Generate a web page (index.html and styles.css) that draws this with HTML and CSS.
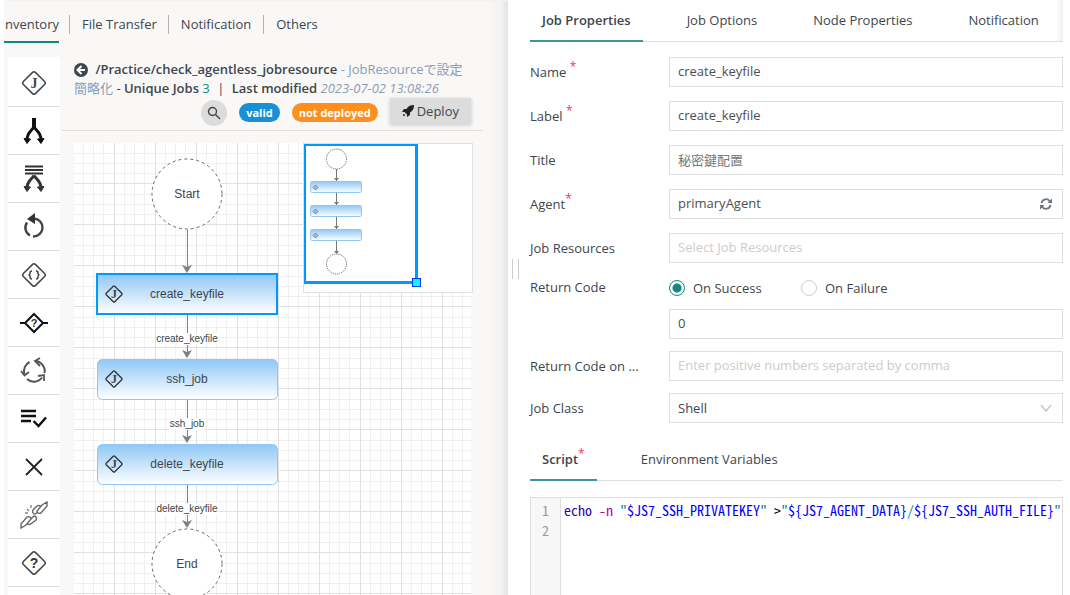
FILE: index.html
```html
<!DOCTYPE html>
<html lang="en">
<head>
    <meta charset="UTF-8">
    <title>Workflow configuration</title>
    <link rel="stylesheet" href="styles.css">
</head>
<body>
    <div class="page">
        <section class="left-panel">
            <nav class="main-nav">
                <a href="#" class="active">nventory</a>
                <a href="#">File Transfer</a>
                <a href="#">Notification</a>
                <a href="#">Others</a>
            </nav>
            <div class="workspace">
                <div class="toolbar">
                    <button type="button" aria-label="Job">
                        <svg width="28" height="28" viewBox="0 0 28 28" fill="none" stroke="#444" stroke-width="1.5">
                            <rect x="5.5" y="5.5" width="17" height="17" rx="2" transform="rotate(45 14 14)"/>
                            <text class="glyph-j" x="14" y="19">J</text>
                        </svg>
                    </button>
                    <button type="button" aria-label="Fork">
                        <svg width="28" height="28" viewBox="0 0 28 28" fill="none" stroke="#111" stroke-width="3">
                            <path d="M14 1v10" stroke-width="4"/>
                            <path d="M14 9c-1 5-7 5-7 14M14 9c1 5 7 5 7 14"/>
                            <path d="M4 21.500l3 5 3.500-4.500zM24 21.500l-3 5-3.500-4.500z" fill="#111" stroke-width="1"/>
                        </svg>
                    </button>
                    <button type="button" aria-label="Fork list">
                        <svg width="28" height="28" viewBox="0 0 28 28" fill="none" stroke="#333" stroke-width="3">
                            <path d="M5 1.500h18M5 5h18M5 8.500h18" stroke-width="1.800"/>
                            <path d="M7 23c0-7 4-8 7-12.500M21 23c0-7-4-8-7-12.500"/>
                            <path d="M4 21.500l3 5 3.500-4.500zM24 21.500l-3 5-3.500-4.500z" fill="#333" stroke-width="1"/>
                        </svg>
                    </button>
                    <button type="button" aria-label="Retry">
                        <svg width="28" height="28" viewBox="0 0 28 28" fill="none" stroke="#444" stroke-width="2.4">
                            <path d="M14 5.500a9 9 0 1 1-1 18M10 22.500a9 9 0 0 1-3-13"/>
                            <path d="M15 0v11l-8-5z" fill="#333" stroke="none"/>
                        </svg>
                    </button>
                    <button type="button" aria-label="Lock">
                        <svg width="28" height="28" viewBox="0 0 28 28" fill="none" stroke="#444" stroke-width="1.5">
                            <rect x="5.5" y="5.5" width="17" height="17" rx="2" transform="rotate(45 14 14)"/>
                            <path d="M12 10c-2 0-2 1-2 2s0 2-1.500 2c1.500 0 1.500 1 1.500 2s0 2 2 2M16 10c2 0 2 1 2 2s0 2 1.500 2c-1.500 0-1.500 1-1.500 2s0 2-2 2"/>
                        </svg>
                    </button>
                    <button type="button" aria-label="If">
                        <svg width="28" height="28" viewBox="0 0 28 28" fill="none" stroke="#111" stroke-width="2">
                            <path d="M14 5l9 9-9 9-9-9zM0 14h5M23 14h5"/>
                            <text class="glyph-q small" x="14" y="18">?</text>
                        </svg>
                    </button>
                    <button type="button" aria-label="Cycle">
                        <svg width="28" height="28" viewBox="0 0 28 28" fill="none" stroke="#555" stroke-width="2">
                            <path d="M4.500 17a10 10 0 0 1 5-12M15 4a10 10 0 0 1 9.500 12M22 20.500a10 10 0 0 1-15 1.500"/>
                            <path d="M20 1l-5 3 5 5M1 14l3.500 4.500L9 15M24 24v-6l-6 1" stroke-width="1.800"/>
                        </svg>
                    </button>
                    <button type="button" aria-label="Finish">
                        <svg width="28" height="28" viewBox="0 0 28 28" fill="none" stroke="#111" stroke-width="2.4">
                            <path d="M1 6h15M1 11h15M1 16h10M13.500 16l5 5L26 12.500"/>
                        </svg>
                    </button>
                    <button type="button" aria-label="Fail">
                        <svg width="28" height="28" viewBox="0 0 28 28" fill="none" stroke="#222" stroke-width="1.8">
                            <path d="M6 6l16 16M22 6L6 22"/>
                        </svg>
                    </button>
                    <button type="button" aria-label="Break link">
                        <svg width="28" height="28" viewBox="0 0 28 28" fill="none" stroke="#666" stroke-width="1.4">
                            <path d="M1 27v-4l6-7c2-1 4 0 4 2l-5 6zM7 22c1 2 3 2 5 0l4-3c1-2 0-4-2-4l-3 3"/>
                            <path d="M27 1v4l-6 7c-2 1-4 0-4-2l5-6zM21 6c-1-2-3-2-5 0l-3 3c-1 2 0 4 2 4l3-2"/>
                            <path d="M7 8l2 2M11 4v3M5 12h3" stroke="#888"/>
                        </svg>
                    </button>
                    <button type="button" aria-label="Prompt">
                        <svg width="28" height="28" viewBox="0 0 28 28" fill="none" stroke="#444" stroke-width="1.5">
                            <rect x="5.5" y="5.5" width="17" height="17" rx="2" transform="rotate(45 14 14)"/>
                            <text class="glyph-q" x="14" y="19">?</text>
                        </svg>
                    </button>
                    <button type="button" aria-label="More"></button>
                </div>

                <div class="designer">
                    <header class="wf-header">
                        <div class="wf-title">
                            <svg class="back" width="14" height="14" viewBox="0 0 14 14">
                                <circle cx="7" cy="7" r="7" fill="#3d464d"/>
                                <path d="M7.500 3L3.500 7l4 4M4 7h7" fill="none" stroke="#fff" stroke-width="2"/>
                            </svg>
                            <span class="path">/Practice/check_agentless_jobresource</span>
                            <span class="muted">- JobResourceで設定簡略化</span>
                            - <b>Unique Jobs</b> <span class="count">3</span>
                            <span class="bar">|</span>
                            <b>Last modified</b> <i class="muted">2023-07-02 13:08:26</i>
                        </div>
                        <div class="wf-actions">
                            <button type="button" class="search" aria-label="Search">
                                <svg width="14" height="14" viewBox="0 0 14 14" fill="none" stroke="#444" stroke-width="1.4">
                                    <circle cx="5.500" cy="5.500" r="4"/>
                                    <path d="M8.500 8.500l4.500 4.500"/>
                                </svg>
                            </button>
                            <span class="pill valid">valid</span>
                            <span class="pill draft">not deployed</span>
                            <button type="button" class="deploy">
                                <svg width="12" height="12" viewBox="0 0 12 12" fill="#222">
                                    <path d="M12 0C8 0 6 1.500 4.500 4H2L0 7l2.500 0 2.500 2.500V12l3-2V7.500C10.500 6 12 4 12 0zM1.500 8.500L1 11l2.500-.5z"/>
                                </svg>
                                Deploy
                            </button>
                        </div>
                    </header>

                    <div class="canvas">
                        <svg class="graph" width="100%" height="600">
                            <defs>
                                <pattern id="grid" x="40" y="40" width="41" height="41" patternUnits="userSpaceOnUse">
                                    <path d="M10 0h1v41h-1zM20 0h1v41h-1zM30 0h1v41h-1zM0 11h41v1H0zM0 21h41v1H0zM0 31h41v1H0z" fill="#f0f0f0"/>
                                    <path d="M0 0h1v41H0zM0 0h41v1H0z" fill="#e0e0e0"/>
                                </pattern>
                                <linearGradient id="job" x1="0" y1="0" x2="0" y2="1">
                                    <stop offset="0" stop-color="#90c7f5"/>
                                    <stop offset="1" stop-color="#fff"/>
                                </linearGradient>
                                <symbol id="job-icon" viewBox="0 0 20 20">
                                    <rect x="4" y="4" width="12" height="12" rx="1" transform="rotate(45 10 10)" fill="none" stroke="#333" stroke-width="1.300"/>
                                    <text class="node-j" x="10" y="14">J</text>
                                </symbol>
                                <symbol id="head" viewBox="0 0 10 10">
                                    <path d="M0 1l5 8 5-8-5 2z" fill="#808080"/>
                                </symbol>
                            </defs>
                            <rect width="100%" height="100%" fill="url(#grid)"/>

                            <g class="edges">
                                <path d="M113.500 87v40M113.500 172v40M113.500 257v40M113.500 342v40"/>
                            </g>
                            <use href="#head" x="108" y="121" width="10" height="10"/>
                            <use href="#head" x="108" y="206" width="10" height="10"/>
                            <use href="#head" x="108" y="291" width="10" height="10"/>
                            <use href="#head" x="108" y="376" width="10" height="10"/>

                            <circle class="end-node" cx="113" cy="51" r="35"/>
                            <circle class="end-node" cx="113" cy="421" r="35"/>

                            <rect x="23" y="131" width="180" height="40" fill="url(#job)" stroke="#09f" stroke-width="2"/>
                            <rect class="job-node" x="23.5" y="216.5" width="180" height="40" rx="5"/>
                            <rect class="job-node" x="23.5" y="301.5" width="180" height="40" rx="5"/>
                            <use href="#job-icon" x="30" y="141" width="20" height="20"/>
                            <use href="#job-icon" x="30" y="226" width="20" height="20"/>
                            <use href="#job-icon" x="30" y="311" width="20" height="20"/>

                            <g class="node-text">
                                <text x="113" y="55">Start</text>
                                <text x="113" y="155">create_keyfile</text>
                                <text x="113" y="240">ssh_job</text>
                                <text x="113" y="325">delete_keyfile</text>
                                <text x="113" y="425">End</text>
                            </g>
                            <g fill="#fff">
                                <rect x="82" y="190" width="62" height="12"/>
                                <rect x="95" y="275" width="36" height="12"/>
                                <rect x="82" y="360" width="62" height="12"/>
                            </g>
                            <g class="edge-text">
                                <text x="113" y="199">create_keyfile</text>
                                <text x="113" y="284">ssh_job</text>
                                <text x="113" y="369">delete_keyfile</text>
                            </g>
                        </svg>

                        <div class="outline">
                            <svg width="168" height="148" viewBox="0 0 168 148">
                                <path d="M32.500 25v82" stroke="#777"/>
                                <g fill="#fff" stroke="#555" stroke-dasharray="1 1">
                                    <circle cx="32.500" cy="15" r="10"/>
                                    <circle cx="32.500" cy="120" r="10"/>
                                </g>
                                <g fill="url(#job)" stroke="#8fc6f4">
                                    <rect x="6.500" y="37.500" width="51" height="11" rx="2"/>
                                    <rect x="6.500" y="61.500" width="51" height="11" rx="2"/>
                                    <rect x="6.500" y="85.500" width="51" height="11" rx="2"/>
                                </g>
                                <g fill="#abc" stroke="#6e8ba5">
                                    <path d="M11.500 41l2.500 2.500-2.500 2.500L9 43.500zM11.500 65l2.500 2.500-2.500 2.500L9 67.500zM11.500 89l2.500 2.500-2.500 2.500L9 91.500z"/>
                                </g>
                                <path d="M30 34h5l-2.500 3zM30 58h5l-2.500 3zM30 82h5l-2.500 3zM30 107h5l-2.500 3z" fill="#777"/>
                                <path d="M0 0h114v140H0zM2 2v135h109V2z" fill="#09f" fill-rule="evenodd"/>
                                <rect x="108.500" y="134.500" width="8" height="8" fill="#0ff" stroke="#03f"/>
                            </svg>
                        </div>
                    </div>
                </div>
            </div>
        </section>

        <div class="splitter"></div>

        <section class="right-panel">
            <div class="tabs job-tabs">
                <a href="#" class="active">Job Properties</a>
                <a href="#">Job Options</a>
                <a href="#">Node Properties</a>
                <a href="#">Notification</a>
            </div>
            <form>
                <div class="group">
                    <div class="row">
                        <label for="name">Name <sup>*</sup></label>
                        <input type="text" id="name" value="create_keyfile">
                    </div>
                    <div class="row">
                        <label for="label">Label <sup>*</sup></label>
                        <input type="text" id="label" value="create_keyfile">
                    </div>
                    <div class="row">
                        <label for="title">Title</label>
                        <input type="text" id="title" class="jp" value="秘密鍵配置">
                    </div>
                    <div class="row">
                        <label for="agent">Agent<sup>*</sup></label>
                        <div class="field">
                            <input type="text" id="agent" value="primaryAgent">
                            <svg width="12" height="12" viewBox="0 0 12 12" fill="none" stroke="#6c757d" stroke-width="1.800">
                                <path d="M1.500 5a4.600 4.600 0 0 1 8.500-1.500M10.500 7a4.600 4.600 0 0 1-8.500 1.500"/>
                                <path d="M12 .5V5H7.500zM0 11.500V7h4.500z" fill="#6c757d" stroke="none"/>
                            </svg>
                        </div>
                    </div>
                    <div class="row">
                        <label for="resources">Job Resources</label>
                        <input type="text" id="resources" placeholder="Select Job Resources">
                    </div>
                    <div class="row radios">
                        <span class="caption">Return Code</span>
                        <label><input type="radio" name="rc" checked>On Success</label>
                        <label><input type="radio" name="rc">On Failure</label>
                    </div>
                </div>
                <div class="group tight">
                    <div class="row">
                        <span></span>
                        <input type="text" aria-label="Return Code" value="0">
                    </div>
                    <div class="row">
                        <label for="warn">Return Code on ...</label>
                        <input type="text" id="warn" placeholder="Enter positive numbers separated by comma">
                    </div>
                    <div class="row">
                        <label for="class">Job Class</label>
                        <div class="field">
                            <select id="class"><option>Shell</option></select>
                            <svg width="12" height="12" viewBox="0 0 12 12" fill="none" stroke="#bfbfbf" stroke-width="1.200">
                                <path d="M1 3l5 6 5-6"/>
                            </svg>
                        </div>
                    </div>
                </div>
            </form>
            <div class="tabs script-tabs">
                <a href="#" class="active">Script<sup>*</sup></a>
                <a href="#">Environment Variables</a>
            </div>
            <div class="editor">
                <div class="gutter">1<br>2</div>
                <pre><span class="cmd">echo</span> <span class="opt">-n</span> <span class="str">"</span><span class="var">$JS7_SSH_PRIVATEKEY</span><span class="str">"</span> &gt;<span class="str">"</span><span class="var">${JS7_AGENT_DATA}</span><span class="str">/</span><span class="var">${JS7_SSH_AUTH_FILE}</span><span class="str">"</span></pre>
            </div>
        </section>
    </div>
</body>
</html>
```
FILE: styles.css
```css
*{
    box-sizing: border-box;
}
body{
    margin: 0;
    font: 13px/20px "Open Sans", "Noto Sans CJK JP", sans-serif;
    color: #3d464d;
    background: #fff;
}
a{
    color: inherit;
    text-decoration: none;
}
button{
    font: inherit;
    color: inherit;
    border: 0;
    padding: 0;
}
.page{
    display: flex;
    height: 100vh;
    overflow: hidden;
}

/* left side */
.left-panel{
    flex: 0 0 504px;
    margin-left: 4px;
    display: flex;
    flex-direction: column;
    border-top: 1px solid #f3f2f1;
    background: linear-gradient(to left, #e4e3e2, #f2f1f0 6px, #f9f8f7 20px);
}
.main-nav{
    display: flex;
    height: 42px;
    align-items: center;
    padding-top: 4px;
}
.main-nav a{
    padding: 0 11px 0 12px;
    border-left: 1px solid #b5b5b5;
    line-height: 19px;
}
.main-nav a + a + a{
    padding-right: 12px;
}
.main-nav a.active{
    height: 42px;
    padding: 3px 0 0 1px;
    margin: -4px 10px 0 0;
    line-height: 40px;
    border: 0;
    border-bottom: 2px solid #0f8a83;
}
.workspace{
    display: flex;
    flex: 1;
    min-height: 0;
    padding: 14px 0 0 4px;
}
.toolbar{
    flex: 0 0 52px;
    padding-top: 2px;
    background: #fff;
    overflow: hidden;
}
.toolbar button{
    display: flex;
    width: 52px;
    height: 48px;
    align-items: center;
    justify-content: center;
    background: #fff;
    border-bottom: 1px solid #dedede;
}
.glyph-j, .node-j{
    font: bold 14px "Liberation Serif", serif;
    text-anchor: middle;
    fill: #444;
    stroke: none;
}
.node-j{
    font-size: 12px;
}
.glyph-q{
    font: bold 14px "Liberation Sans", sans-serif;
    text-anchor: middle;
    fill: #333;
    stroke: none;
}
.glyph-q.small{
    font-size: 11px;
}
.designer{
    display: flex;
    flex-direction: column;
    flex: 1;
    margin: 0 25px 0 2px;
}
.wf-header{
    padding: 3px 12px 4px;
    border-bottom: 1px solid #dedede;
}
.wf-title{
    line-height: 19px;
}
.wf-title .back{
    margin-right: 4px;
    vertical-align: -3px;
}
.path, .wf-title b{
    font-weight: 600;
}
.muted{
    color: #8b9bb4;
}
.count{
    color: #0f8a83;
}
.bar{
    margin: 0 4px;
}
.wf-actions{
    display: flex;
    justify-content: flex-end;
    align-items: flex-start;
    gap: 12px;
}
.search{
    display: flex;
    align-items: center;
    justify-content: center;
    width: 26px;
    height: 26px;
    margin-top: 2px;
    border-radius: 50%;
    background: #dcdcdc;
}
.pill{
    margin-top: 5px;
    padding: 0 7px;
    border-radius: 10px;
    color: #fff;
    font-size: 11px;
    font-weight: 700;
    line-height: 19px;
}
.valid{
    background: #1890d5;
}
.draft{
    background: #ff8f1c;
}
.deploy{
    display: flex;
    align-items: center;
    gap: 3px;
    height: 26px;
    padding: 0 12px;
    background: #dcdcdc;
    box-shadow: 0 1px 4px rgba(0, 0, 0, .2);
}
.canvas{
    position: relative;
    flex: 1;
    min-height: 0;
    margin: 12px 12px 0;
    background: #fff;
}
.graph{
    display: block;
}
.edges{
    fill: none;
    stroke: #808080;
}
.end-node{
    fill: #fff;
    stroke: #666;
    stroke-dasharray: 3 3;
}
.job-node{
    fill: url(#job);
    stroke: #90c7f5;
}
.node-text, .edge-text{
    font-family: "Liberation Sans", sans-serif;
    font-size: 12px;
    text-anchor: middle;
    fill: #3d464d;
}
.edge-text{
    font-size: 10px;
}
.outline{
    position: absolute;
    top: 0;
    right: -2px;
    width: 170px;
    height: 150px;
    border: 1px solid #e0e0e0;
    background: #fff;
}

/* right side */
.splitter{
    flex: 0 0 7px;
    height: 20px;
    margin: 259px 11px 0 4px;
    border: 1px solid #ccc;
    border-width: 0 1px;
}
.right-panel{
    display: flex;
    flex-direction: column;
    flex: 1;
    min-width: 0;
    margin-right: 7px;
}
.tabs{
    display: flex;
    gap: 32px;
    border-bottom: 1px solid #dedede;
}
.job-tabs{
    background: linear-gradient(to left, #f0f0f0, #fff 8px);
}
.tabs a{
    padding: 0 12px;
    line-height: 40px;
    margin-bottom: -1px;
    border-bottom: 2px solid transparent;
    white-space: nowrap;
}
.tabs a.active{
    font-weight: 600;
    border-color: #3e939d;
}
sup{
    color: #f5365c;
    font-size: 12px;
    font-weight: 400;
    line-height: 0;
    vertical-align: 6px;
}
.group{
    display: grid;
    gap: 14px;
    margin-top: 15px;
}
.group.tight{
    gap: 12px;
    margin-top: 14px;
}
.row{
    display: grid;
    grid-template-columns: 139px 1fr;
    align-items: center;
}
input[type=text], select{
    display: block;
    width: 100%;
    height: 30px;
    padding: 0 8px 2px;
    border: 1px solid #dedede;
    border-radius: 0;
    background: #fff;
    color: #495057;
    font: inherit;
    outline: 0;
    appearance: none;
}
input.jp{
    color: #777;
}
select{
    padding-bottom: 0;
    color: #3d464d;
}
::placeholder{
    color: #ccc;
}
.field{
    position: relative;
}
.field svg{
    position: absolute;
    top: 9px;
    right: 11px;
    pointer-events: none;
}
.radios{
    grid-template-columns: 139px 132px 1fr;
    height: 18px;
}
.caption{
    padding-bottom: 2px;
}
.radios label{
    display: flex;
    align-items: center;
}
.radios input{
    appearance: none;
    width: 16px;
    height: 16px;
    margin: 0 8px 0 0;
    border: 1px solid #ccc;
    border-radius: 50%;
}
.radios input:checked{
    border-color: #0f8a83;
    background: radial-gradient(#0f8a83 4px, #fff 5px);
}
.script-tabs{
    margin-top: 16px;
}
.editor{
    display: flex;
    flex: 1;
    margin-top: 16px;
    border: 1px solid #dedede;
    border-bottom: 0;
    font: 14px/20px "Noto Sans Mono CJK JP", "Liberation Mono", monospace;
    overflow: hidden;
}
.gutter{
    flex: 0 0 30px;
    padding: 2px 11px 0 0;
    border-right: 1px solid #dedede;
    background: #f7f7f7;
    color: #999;
    text-align: right;
}
.editor pre{
    margin: 0;
    padding: 2px 0 0 3px;
    font: inherit;
    color: #000;
}
.cmd{
    color: #30a;
}
.opt{
    color: #b08;
}
.str{
    color: #088;
}
.var{
    color: #00f;
}
```
